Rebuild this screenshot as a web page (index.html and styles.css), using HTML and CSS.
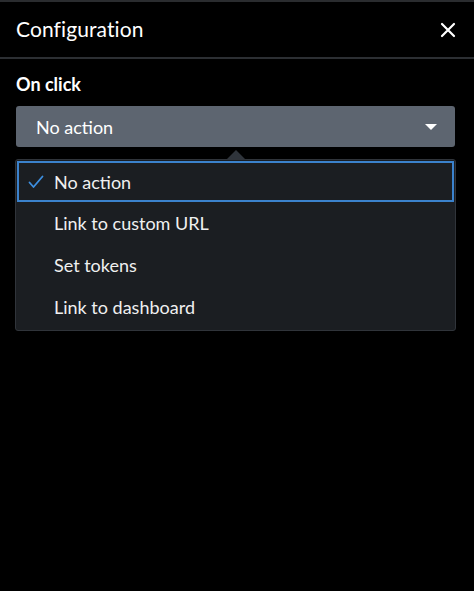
FILE: index.html
```html
<!DOCTYPE html>
<html>
<head>
<meta charset="utf-8">
<link rel="stylesheet" href="styles.css">
</head>
<body>
<div class="panel">
  <header class="header">
    <h1 class="title">Configuration</h1>
    <button class="close" aria-label="Close">
      <svg width="16" height="16" viewBox="0 0 16 16"><path d="M2 2 L14 14 M14 2 L2 14" stroke="#fff" stroke-width="2.2" stroke-linecap="round"/></svg>
    </button>
  </header>
  <div class="body">
    <div class="label">On click</div>
    <div class="select">
      <span>No action</span>
      <span class="caret"></span>
    </div>
    <div class="menu-wrap">
      <span class="pointer"></span>
      <ul class="menu">
        <li class="item selected">
          <svg class="check" width="16" height="14" viewBox="0 0 16 14"><path d="M1.5 7.5 L5.5 12 L14.5 1.5" fill="none" stroke="#3d8fe0" stroke-width="1.8" stroke-linecap="round" stroke-linejoin="round"/></svg>
          No action
        </li>
        <li class="item">Link to custom URL</li>
        <li class="item">Set tokens</li>
        <li class="item">Link to dashboard</li>
      </ul>
    </div>
  </div>
</div>
</body>
</html>
```
FILE: styles.css
```css
html, body {
  margin: 0;
  padding: 0;
  background: #000;
  height: 100%;
}
body {
  font-family: "Lato", "Open Sans", sans-serif;
  color: #fff;
}
.panel {
  border-top: 2px solid #2a2c2f;
}
.header {
  height: 57px;
  box-sizing: border-box;
  padding: 0 16px 3px 16px;
  display: flex;
  align-items: center;
  justify-content: space-between;
  border-bottom: 2px solid #2c2f33;
}
.title {
  margin: 0;
  font-size: 21px;
  font-weight: 400;
  letter-spacing: 0.1px;
}
.close {
  background: none;
  border: 0;
  padding: 0;
  margin-right: 2px;
  margin-top: 3px;
  display: flex;
  cursor: pointer;
}
.body {
  padding: 14px 19px 0 16px;
}
.label {
  font-size: 18px;
  font-weight: 700;
  line-height: 22px;
}
.select {
  margin-top: 11px;
  height: 41px;
  background: #5d6570;
  border-radius: 3px;
  display: flex;
  align-items: center;
  justify-content: space-between;
  padding: 0 18px 0 20px;
  font-size: 18px;
  box-sizing: border-box;
}
.caret {
  width: 0;
  height: 0;
  border-left: 6px solid transparent;
  border-right: 6px solid transparent;
  border-top: 6px solid #fff;
}
.menu-wrap {
  position: relative;
  margin: 12px -1px 0 -1px;
}
.pointer {
  position: absolute;
  top: -9px;
  left: 212px;
  width: 0;
  height: 0;
  border-left: 9px solid transparent;
  border-right: 9px solid transparent;
  border-bottom: 9px solid #2f343b;
}
.menu {
  list-style: none;
  margin: 0;
  padding: 0 1px 2px 1px;
  background: #1b1e22;
  border: 1px solid #30343a;
  border-radius: 3px;
}
.item {
  height: 42px;
  box-sizing: border-box;
  display: flex;
  align-items: center;
  padding-left: 37px;
  font-size: 18px;
  color: #f0f0f0;
  position: relative;
}
.item.selected {
  border: 2px solid #3b82cc;
  padding-left: 35px;
  margin-top: 1px;
  height: 41px;
}
.check {
  position: absolute;
  left: 9px;
  top: 12px;
}
```
